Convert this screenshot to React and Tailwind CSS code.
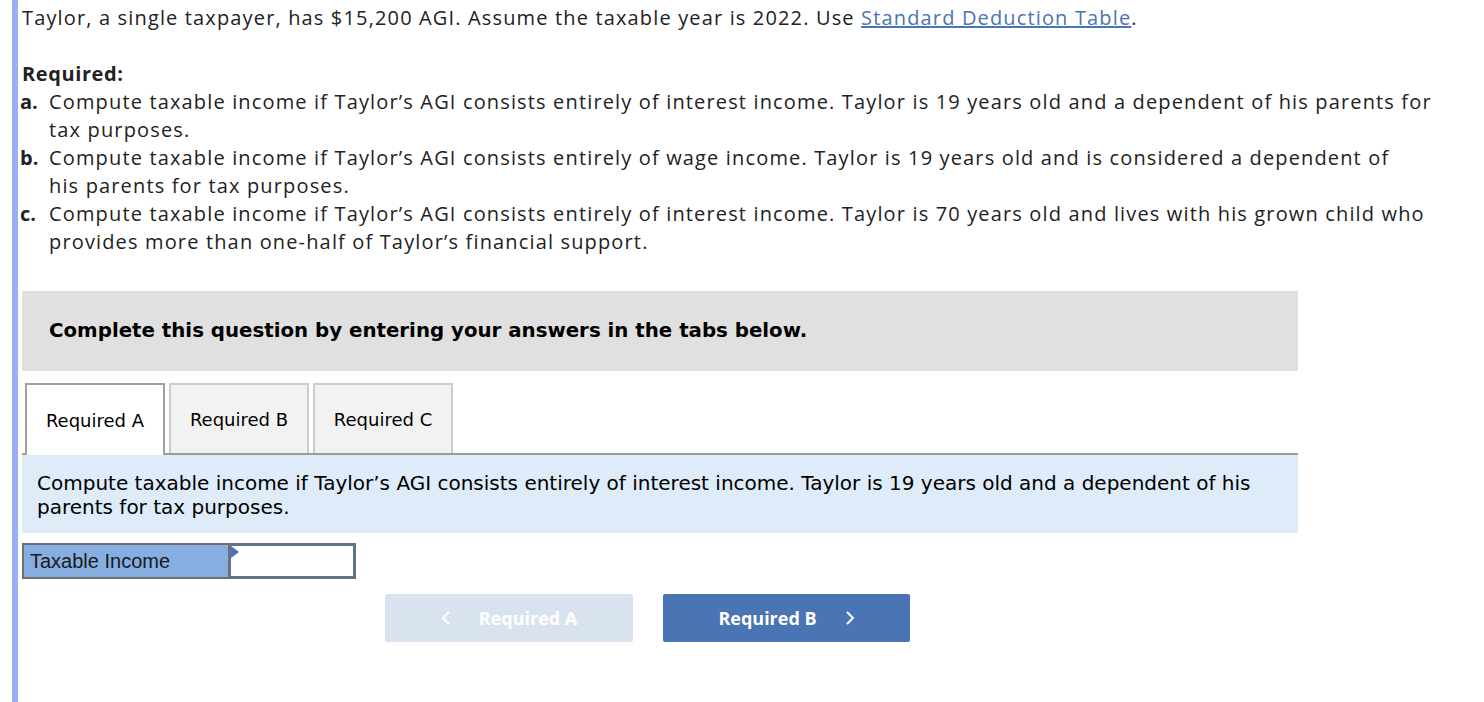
import { useState } from "react";

const tabs = ["Required A", "Required B", "Required C"];

const parts = [
  {
    label: "a.",
    lines: [
      "Compute taxable income if Taylor’s AGI consists entirely of interest income. Taylor is 19 years old and a dependent of his parents for",
      "tax purposes.",
    ],
  },
  {
    label: "b.",
    lines: [
      "Compute taxable income if Taylor’s AGI consists entirely of wage income. Taylor is 19 years old and is considered a dependent of",
      "his parents for tax purposes.",
    ],
  },
  {
    label: "c.",
    lines: [
      "Compute taxable income if Taylor’s AGI consists entirely of interest income. Taylor is 70 years old and lives with his grown child who",
      "provides more than one-half of Taylor’s financial support.",
    ],
  },
];

export default function App() {
  const [active, setActive] = useState(0);
  const [value, setValue] = useState("");

  return (
    <div className="flex min-h-[702px] bg-white">
      {/* left accent bar */}
      <div className="ml-[12px] w-[6px] shrink-0 bg-[#97b1f2]" />

      <div className="w-[1280px] pl-[4px] pt-[4px]">
        <div className="whitespace-nowrap font-['Open_Sans',sans-serif] text-[20px] leading-[28px] tracking-[1.15px] text-[#222]">
          <p>
            Taylor, a single taxpayer, has $15,200 AGI. Assume the taxable year is 2022. Use{" "}
            <a href="#" className="text-[#4a74b4] underline">Standard Deduction Table</a>.
          </p>

          <p className="mt-[28px] font-bold tracking-[0.6px]">Required:</p>
          <ol>
            {parts.map((p) => (
              <li key={p.label} className="flex">
                <span className="w-[29px] shrink-0 -ml-[2px] font-bold tracking-normal">{p.label}</span>
                <span>
                  {p.lines[0]}
                  <br />
                  {p.lines[1]}
                </span>
              </li>
            ))}
          </ol>
        </div>

        <div className="mt-[35px] w-[1276px] bg-[#e0e0e0] px-[27px] py-[22px] font-['DejaVu_Sans',Verdana,sans-serif]">
          <p className="text-[19.8px] font-bold leading-[36px] text-black">
            Complete this question by entering your answers in the tabs below.
          </p>
        </div>

        <div className="mt-[12px] w-[1276px] font-['DejaVu_Sans',Verdana,sans-serif]">
          <div className="flex items-end gap-[4px] pl-[3px]">
            {tabs.map((t, i) => (
              <button
                key={t}
                onClick={() => setActive(i)}
                className={
                  i === active
                    ? "relative -mb-[2px] h-[72px] w-[140px] border-2 border-b-0 border-[#a0a0a0] bg-white text-[18px] text-black"
                    : "h-[70px] w-[140px] border-2 border-b-0 border-[#cccccc] bg-[#f2f2f2] text-[18px] text-black"
                }
              >
                {t}
              </button>
            ))}
            <div className="flex-1" />
          </div>
          <div className="h-[2px] bg-[#9a9a9a]" />
          <div className="bg-[#deebf8] px-[15px] pt-[16px] pb-[14px] pr-[30px] text-[20px] leading-[24px] text-black">
            Compute taxable income if Taylor’s AGI consists entirely of interest income. Taylor is 19 years old and a dependent of his parents for tax purposes.
          </div>
        </div>

        <div className="mt-[10px] flex h-[36px] w-[334px] border-2 border-[#707070] font-['Liberation_Sans',Arial,sans-serif]">
          <div className="flex w-[204px] items-center bg-[#86aee1] pl-[6px] text-[20px] text-[#1a1a1a]">
            Taxable Income
          </div>
          <div className="w-[2px] bg-[#707070]" />
          <div className="relative flex-1 border border-[#4a74b4] bg-white">
            <span className="absolute left-0 top-0 h-0 w-0 border-y-[6px] border-l-[8px] border-y-transparent border-l-[#4a74b4]" />
            <input
              value={value}
              onChange={(e) => setValue(e.target.value)}
              className="h-full w-full bg-transparent px-2 text-right text-[16px] outline-none"
            />
          </div>
        </div>

        <div className="mt-[15px] flex gap-[30px] pl-[363px] font-['Open_Sans',sans-serif]">
          <button
            disabled
            className="flex h-[48px] w-[248px] items-center justify-center gap-[28px] rounded-[2px] bg-[#d9e3ef] text-[18px] font-bold text-white"
          >
            <svg width="10" height="16" viewBox="0 0 10 16" fill="none" stroke="currentColor" strokeWidth="2">
              <path d="M8 2 L2 8 L8 14" />
            </svg>
            <span>Required A</span>
          </button>
          <button
            onClick={() => setActive(1)}
            className="flex h-[48px] w-[247px] items-center justify-center gap-[28px] rounded-[2px] bg-[#4a74b4] text-[18px] font-bold text-white"
          >
            <span>Required B</span>
            <svg width="10" height="16" viewBox="0 0 10 16" fill="none" stroke="currentColor" strokeWidth="2">
              <path d="M2 2 L8 8 L2 14" />
            </svg>
          </button>
        </div>
      </div>
    </div>
  );
}
